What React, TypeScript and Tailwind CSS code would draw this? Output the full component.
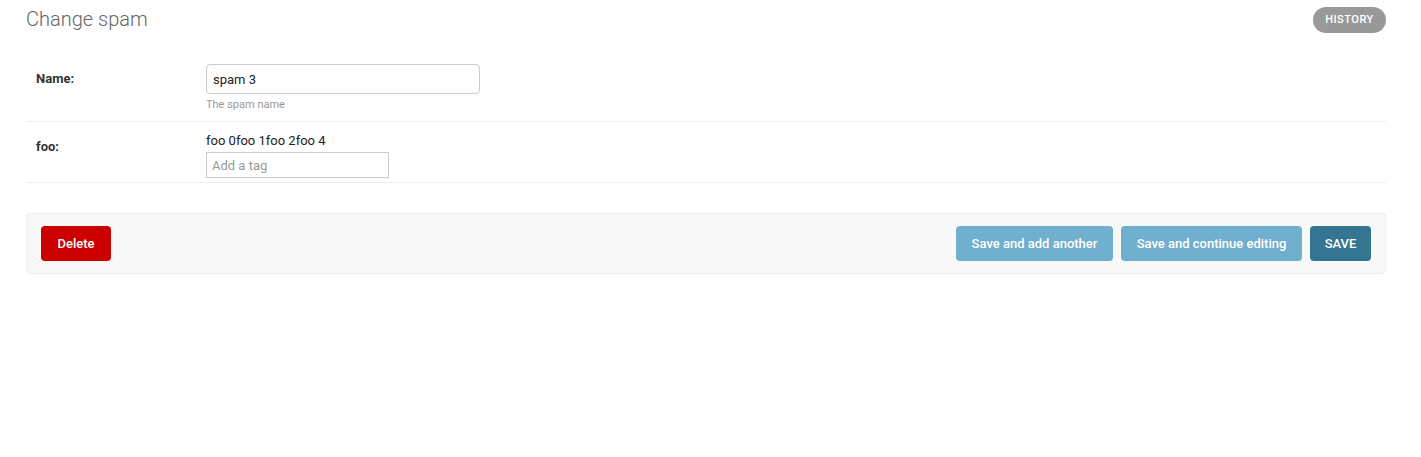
import React from "react";

export default function App() {
  return (
    <div
      className="min-h-[457px] w-full bg-white pl-[26px] pr-[35px] text-[#333]"
      style={{ fontFamily: "Roboto, 'Liberation Sans', sans-serif" }}
    >
      <div className="flex items-start justify-between pt-[7px]">
        <h1 className="text-[20px] font-light leading-[24px] text-[#666]">Change spam</h1>
        <button className="flex h-[26px] w-[73px] items-center justify-center rounded-full bg-[#999] text-[11px] font-medium uppercase tracking-[0.5px] text-white">
          History
        </button>
      </div>

      <div className="mt-[21px]">
        <div className="flex border-b border-[#eee] pt-[10px] pb-[10px]">
          <div className="w-[180px] shrink-0 pl-[10px]">
            <label className="mt-[7px] block text-[13px] font-bold leading-[16px] text-[#333]">Name:</label>
          </div>
          <div className="flex flex-col">
            <input
              readOnly
              value="spam 3"
              className="h-[30px] w-[274px] rounded-[4px] border border-[#ccc] px-[6px] text-[13px] text-[#222] outline-none"
            />
            <div className="mt-[4px] text-[11px] leading-[13px] text-[#999]">The spam name</div>
          </div>
        </div>

        <div className="flex border-b border-[#eee] pt-[10px] pb-[4px]">
          <div className="w-[180px] shrink-0 pl-[10px]">
            <label className="mt-[7px] block text-[13px] font-bold leading-[16px] text-[#333]">foo:</label>
          </div>
          <div className="flex flex-col">
            <div className="mt-[1px] text-[13px] leading-[16px] text-[#222]">foo 0foo 1foo 2foo 4</div>
            <input
              readOnly
              placeholder="Add a tag"
              className="mt-[3px] h-[26px] w-[183px] border border-[#ccc] px-[5px] text-[13px] text-[#222] outline-none placeholder:text-[#999]"
            />
          </div>
        </div>
      </div>

      <div className="mt-[30px] flex h-[61px] items-center justify-between rounded-[4px] border border-[#eee] bg-[#f8f8f8] px-[14px]">
        <button className="flex h-[35px] w-[70px] items-center justify-center rounded-[4px] bg-[#cc0000] text-[13px] font-medium text-white">
          Delete
        </button>
        <div className="flex gap-[8px]">
          <button className="flex h-[35px] w-[157px] items-center justify-center rounded-[4px] bg-[#70afcd] text-[13px] font-medium text-white">
            Save and add another
          </button>
          <button className="flex h-[35px] w-[181px] items-center justify-center rounded-[4px] bg-[#70afcd] text-[13px] font-medium text-white">
            Save and continue editing
          </button>
          <button className="flex h-[35px] w-[61px] items-center justify-center rounded-[4px] bg-[#347591] text-[13px] font-medium uppercase text-white">
            Save
          </button>
        </div>
      </div>
    </div>
  );
}
